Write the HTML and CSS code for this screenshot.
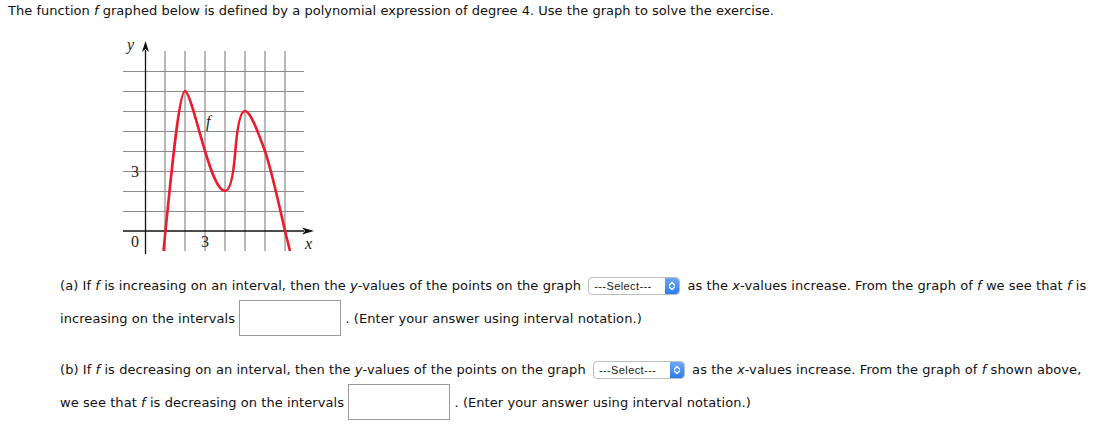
FILE: index.html
```html
<!DOCTYPE html>
<html>
<head>
<meta charset="utf-8">
<link rel="stylesheet" href="styles.css">
</head>
<body>
<div class="page">
  <p class="intro">The function <i>f</i> graphed below is defined by a polynomial expression of degree 4. Use the graph to solve the exercise.</p>
  <svg class="graph" width="210" height="222" viewBox="110 35 210 222" xmlns="http://www.w3.org/2000/svg">
    <g class="grid">
      <line x1="165" y1="51" x2="165" y2="251"/>
      <line x1="185" y1="51" x2="185" y2="251"/>
      <line x1="205" y1="51" x2="205" y2="251"/>
      <line x1="225" y1="51" x2="225" y2="251"/>
      <line x1="245" y1="51" x2="245" y2="251"/>
      <line x1="265" y1="51" x2="265" y2="251"/>
      <line x1="285" y1="51" x2="285" y2="251"/>
      <line x1="123" y1="71.5" x2="304" y2="71.5"/>
      <line x1="123" y1="91.5" x2="304" y2="91.5"/>
      <line x1="123" y1="111.5" x2="304" y2="111.5"/>
      <line x1="123" y1="131.5" x2="304" y2="131.5"/>
      <line x1="123" y1="151.5" x2="304" y2="151.5"/>
      <line x1="123" y1="171.5" x2="304" y2="171.5"/>
      <line x1="123" y1="191.5" x2="304" y2="191.5"/>
      <line x1="123" y1="211.5" x2="304" y2="211.5"/>
    </g>
    <g class="axes">
      <line x1="145.5" y1="254" x2="145.5" y2="50"/>
      <line x1="123" y1="231" x2="304" y2="231"/>
    </g>
    <polygon class="arrow" points="145.5,41 149,52 145.5,49 142,52"/>
    <polygon class="arrow" points="314,231 302,227.5 305,231 302,234.5"/>
    <path class="curve" d="M163.5,251 C171,175 179,91 185,91 C189,91 198,128 205,151 C211,171 218,191 225,191 C230,191 233,178 235,155 C237,128 240,111 245,111 C251,111 260,138 265,151 C270,166 281,213 285,231 L290,251"/>
    <text class="lbl it" x="127" y="50">y</text>
    <text class="lbl it" x="206" y="127">f</text>
    <text class="lbl" x="131" y="177">3</text>
    <text class="lbl" x="131" y="247">0</text>
    <text class="lbl" x="201" y="247">3</text>
    <text class="lbl it" x="305" y="249">x</text>
  </svg>

  <div class="part">
    <div class="line row1">(a) If <i>f</i> is increasing on an interval, then the <i>y</i>-values of the points on the graph <span class="select"><span class="sel-text">---Select---</span><span class="stepper"><svg width="8" height="10" viewBox="0 0 8 10"><path d="M1.5,4 L4,1.5 L6.5,4 M1.5,6 L4,8.5 L6.5,6"/></svg></span></span> as the <i>x</i>-values increase. From the graph of <i>f</i> we see that <i>f</i> is</div>
    <div class="line row2">increasing on the intervals <span class="box"></span> . (Enter your answer using interval notation.)</div>
  </div>

  <div class="part part-b">
    <div class="line row1">(b) If <i>f</i> is decreasing on an interval, then the <i>y</i>-values of the points on the graph <span class="select"><span class="sel-text">---Select---</span><span class="stepper"><svg width="8" height="10" viewBox="0 0 8 10"><path d="M1.5,4 L4,1.5 L6.5,4 M1.5,6 L4,8.5 L6.5,6"/></svg></span></span> as the <i>x</i>-values increase. From the graph of <i>f</i> shown above,</div>
    <div class="line row2">we see that <i>f</i> is decreasing on the intervals <span class="box"></span> . (Enter your answer using interval notation.)</div>
  </div>
</div>
</body>
</html>
```

FILE: styles.css
```css
html, body {
  margin: 0;
  padding: 0;
  background: #ffffff;
}

.page {
  padding: 3px 8px 0 8px;
  font-family: "DejaVu Sans", Verdana, sans-serif;
  font-size: 13px;
  color: #111111;
}

.intro {
  margin: 0;
  line-height: 15px;
  letter-spacing: 0.03px;
}

.graph {
  display: block;
  margin: 17px 0 0 102px;
}

.grid line {
  stroke: #8a8a8a;
  stroke-width: 1.2;
}

.axes line {
  stroke: #111111;
  stroke-width: 1.3;
}

.arrow {
  fill: #111111;
}

.curve {
  fill: none;
  stroke: #ee1b2e;
  stroke-width: 2.6;
  stroke-linejoin: round;
}

.lbl {
  font-family: "Liberation Serif", "DejaVu Serif", serif;
  font-size: 16px;
  fill: #222222;
}

.lbl.it {
  font-style: italic;
}

.part {
  margin: 20px 0 0 52px;
  letter-spacing: 0.07px;
}

.part-b {
  margin-top: 24px;
}

.line {
  white-space: nowrap;
}

.row1 {
  height: 18px;
  line-height: 18px;
}

.row2 {
  height: 36px;
  line-height: 36px;
  margin-top: 6px;
}

.select {
  display: inline-flex;
  align-items: stretch;
  vertical-align: middle;
  box-sizing: border-box;
  height: 18px;
  width: 92px;
  margin: -2px 3px 0 3px;
  border: 1px solid #bdbdbd;
  border-radius: 4px;
  background: #ffffff;
  overflow: hidden;
  line-height: normal;
  letter-spacing: 0.4px;
}

.sel-text {
  flex: 1;
  display: flex;
  align-items: center;
  padding-left: 5px;
  font-family: "Liberation Sans", Arial, sans-serif;
  font-size: 11px;
  color: #222222;
}

.stepper {
  width: 14px;
  display: flex;
  align-items: center;
  justify-content: center;
  background: linear-gradient(#6aa8f7, #2f7cf0);
  border-radius: 0 3px 3px 0;
}

.stepper path {
  fill: none;
  stroke: #ffffff;
  stroke-width: 1.4;
  stroke-linecap: round;
  stroke-linejoin: round;
}

.box {
  display: inline-block;
  vertical-align: middle;
  box-sizing: border-box;
  width: 102px;
  height: 36px;
  margin: -3px 0 0 0;
  border: 1px solid #9a9a9a;
  background: #ffffff;
}
```
